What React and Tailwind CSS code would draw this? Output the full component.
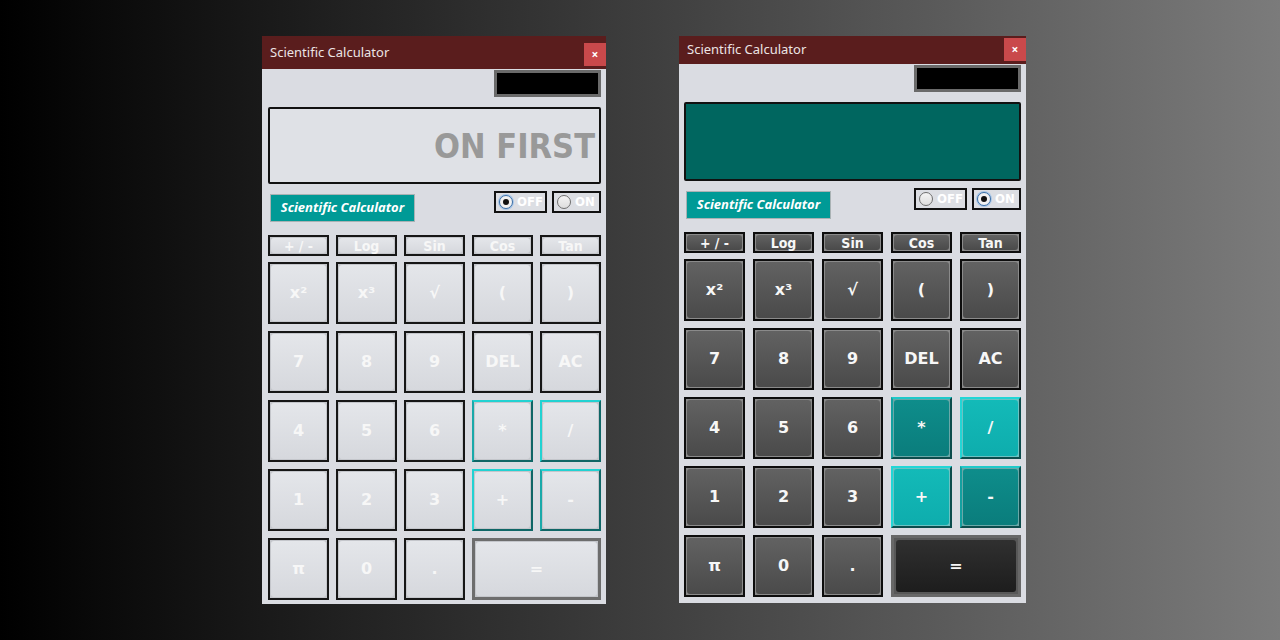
import React from "react";

const KEYS = [
    [["x²", "num"], ["x³", "num"], ["√", "num"], ["(", "num"], [")", "num"]],
    [["7", "num"], ["8", "num"], ["9", "num"], ["DEL", "num"], ["AC", "num"]],
    [["4", "num"], ["5", "num"], ["6", "num"], ["*", "opDark"], ["/", "opLight"]],
    [["1", "num"], ["2", "num"], ["3", "num"], ["+", "opLight"], ["-", "opDark"]],
    [["π", "num"], ["0", "num"], [".", "num"], ["=", "eq"]],
];

const SMALL = ["+ / -", "Log", "Sin", "Cos", "Tan"];

const OUTER = {
    off: {
        num: "border-2 border-[#161616] bg-[#c4c6cb] p-px",
        opDark: "border-2 border-[#0f6666] border-t-[#22d2d2] border-l-[#1aa9a9] bg-[#c4c6cb] p-px",
        opLight: "border-2 border-[#0f6666] border-t-[#22d2d2] border-l-[#22d2d2] bg-[#c4c6cb] p-px",
        eq: "border-[3px] border-[#6d6d6d] bg-[#c4c6cb] p-px",
    },
    on: {
        num: "border-2 border-[#0d0d0d] bg-[#8a8a8a] p-px",
        opDark: "border-2 border-[#0c4c4c] border-t-[#1fc9c9] border-l-[#13a0a0] bg-[#6aa8a8] p-px",
        opLight: "border-2 border-[#0c4c4c] border-t-[#22d6d6] border-l-[#22d6d6] bg-[#6cc2c2] p-px",
        eq: "border-[3px] border-[#686868] bg-[#585858] p-[2px]",
    },
};

const INNER = {
    off: {
        num: "bg-gradient-to-b from-[#e4e6ea] to-[#d6d8dd]",
        opDark: "bg-gradient-to-b from-[#e4e6ea] to-[#d6d8dd]",
        opLight: "bg-gradient-to-b from-[#e4e6ea] to-[#d6d8dd]",
        eq: "bg-gradient-to-b from-[#e4e6ea] to-[#d6d8dd]",
    },
    on: {
        num: "bg-gradient-to-b from-[#626262] to-[#4a4a4a]",
        opDark: "bg-gradient-to-b from-[#0e8d8b] to-[#0a7d7c]",
        opLight: "bg-gradient-to-b from-[#13bab8] to-[#0eadad]",
        eq: "bg-gradient-to-b from-[#303030] to-[#1d1d1d]",
    },
};

function Key({ label, kind, mode, small }) {
    return (
        <div className={`${OUTER[mode][kind]} ${kind === "eq" ? "col-span-2" : ""} ${small ? "h-[21px]" : "h-[62px]"}`}>
            <div
                className={`flex h-full items-center justify-center rounded-[3px] ${INNER[mode][kind]} font-bold text-[#f7f7f7] ${
                    small ? "text-[14px] leading-none" : "text-[16px]"
                }`}
                style={{ fontFamily: small ? "'DejaVu Sans Condensed', 'DejaVu Sans', sans-serif" : "'DejaVu Sans', sans-serif" }}
            >
                {label}
            </div>
        </div>
    );
}

function Radio({ label, checked, width }) {
    return (
        <div className={`flex h-[22px] ${width} items-center gap-[4px] overflow-hidden border-2 border-[#111] bg-[#dcdee3] pl-[3px]`}>
            <span
                className={`flex h-[14px] w-[14px] shrink-0 items-center justify-center rounded-full border ${
                    checked ? "border-[#3b6fa6] bg-[#f2f2f2] ring-1 ring-[#a9c6e6]" : "border-[#6f6f6f] bg-gradient-to-b from-[#f4f4f4] to-[#dedede]"
                }`}
            >
                {checked && <span className="h-[6px] w-[6px] rounded-full bg-[#111]" />}
            </span>
            <span
                className="whitespace-nowrap text-[13px] font-bold text-white"
                style={{ fontFamily: "'DejaVu Sans Condensed', 'DejaVu Sans', sans-serif" }}
            >
                {label}
            </span>
        </div>
    );
}

function Calculator({ mode, width, titleH, pl, displayH, gapX, pb }) {
    const on = mode === "on";
    return (
        <div className={`flex ${width} flex-col bg-[#dadce2]`}>
            {/* title bar */}
            <div className={`flex ${titleH} items-center justify-between bg-[#5a1d1d]`}>
                <span className="pl-[8px] text-[13px] text-[#ece4e4]" style={{ fontFamily: "'Noto Sans', sans-serif" }}>
                    Scientific Calculator
                </span>
                <div className="mb-[3px] flex h-[23px] w-[22px] items-center justify-center self-end bg-[#c9494b] text-[12px] font-bold leading-none text-white">
                    ×
                </div>
            </div>

            <div className={`flex flex-col ${pl} pr-[5px] ${pb}`}>
                {/* black box */}
                <div className="mt-px flex justify-end">
                    <div className="h-[27px] w-[107px] border-[3px] border-[#6a6a6a] bg-black" />
                </div>

                {/* display */}
                <div
                    className={`mt-[10px] flex ${displayH} items-center justify-end rounded-[2px] border-2 border-[#111] pr-[4px] ${
                        on ? "bg-[#00665f]" : "bg-[#dfe1e6]"
                    }`}
                >
                    {!on && (
                        <span
                            className="text-[34px] font-bold leading-none text-[#999999]"
                            style={{ fontFamily: "'DejaVu Sans Condensed', 'DejaVu Sans', sans-serif" }}
                        >
                            ON FIRST
                        </span>
                    )}
                </div>

                {/* label + radios */}
                <div className="mt-[7px] flex items-start justify-between">
                    <div
                        className="ml-[2px] mt-[3px] flex h-[28px] w-[145px] items-center justify-center border border-[#a9b2b4] bg-[#009a96] text-[13px] font-bold italic text-white"
                        style={{ fontFamily: "'Open Sans', sans-serif" }}
                    >
                        Scientific Calculator
                    </div>
                    <div className="flex gap-[5px]">
                        <Radio label="OFF" checked={!on} width="w-[53px]" />
                        <Radio label="ON" checked={on} width="w-[49px]" />
                    </div>
                </div>

                {/* small function row */}
                <div className={`mt-[13px] grid grid-cols-5 ${gapX}`}>
                    {SMALL.map((s) => (
                        <Key key={s} label={s} kind="num" mode={mode} small />
                    ))}
                </div>

                {/* keypad */}
                <div className={`mt-[6px] grid grid-cols-5 ${gapX} gap-y-[7px]`}>
                    {KEYS.flat().map(([label, kind]) => (
                        <Key key={label} label={label} kind={kind} mode={mode} />
                    ))}
                </div>
            </div>
        </div>
    );
}

export default function App() {
    return (
        <div className="flex h-[640px] w-full items-start gap-[73px] overflow-hidden bg-[linear-gradient(to_right,#000000,#7b7b7b)] pl-[262px] pt-[36px]">
            <Calculator
                mode="off"
                width="w-[344px]"
                titleH="h-[33px]"
                pl="pl-[6px]"
                displayH="h-[77px]"
                gapX="gap-x-[7px]"
                pb="pb-[4px]"
            />
            <Calculator
                mode="on"
                width="w-[347px]"
                titleH="h-[28px]"
                pl="pl-[5px]"
                displayH="h-[79px]"
                gapX="gap-x-[8px]"
                pb="pb-[6px]"
            />
        </div>
    );
}
